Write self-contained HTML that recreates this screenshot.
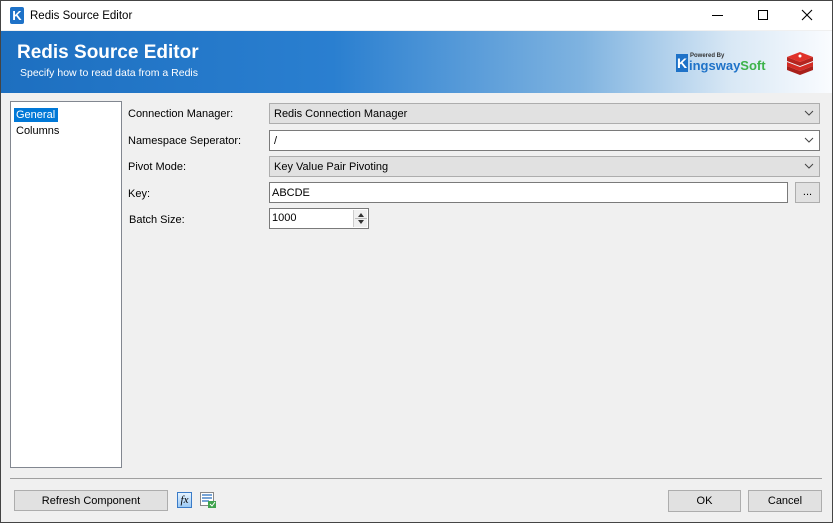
<!DOCTYPE html>
<html><head><style>
*{box-sizing:border-box;margin:0;padding:0}
body{width:833px;height:523px;overflow:hidden;background:#f0f0f0;font-family:"Liberation Sans",sans-serif;font-size:11px;color:#000;position:relative}
.abs{position:absolute}
.frame{left:0;top:0;width:833px;height:523px;border:1px solid #444;z-index:10;pointer-events:none}
.title{left:0;top:0;width:833px;height:30px;background:#fff}
.banner{left:1px;top:31px;width:831px;height:62px;background:linear-gradient(90deg,#1d6fc0 0%,#2a7fd0 40%,#7fb3e0 70%,#d9e8f5 88%,#fafcff 100%)}
.lbl{font-size:11px}
.combo{background:#e1e1e1;border:1px solid #adadad;height:21px;padding:4px 4px}
.tb{background:#fff;border:1px solid #7a7a7a;height:21px;padding:4px 2px}
.chev{position:absolute;right:4px;top:3px}
.btn{background:#e1e1e1;border:1px solid #adadad;text-align:center;padding-top:4px}
</style></head><body>
<div class="abs frame"></div>
<div class="abs title">
 <div class="abs" style="left:10px;top:7px;width:14px;height:17px;background:#1e72c8;border-radius:2px;color:#fff;font-weight:bold;font-size:13px;text-align:center;line-height:17px">K</div>
 <div class="abs" style="left:30px;top:10px;font-size:11.5px">Redis Source Editor</div>
 <div class="abs" style="left:712px;top:15px;width:11px;height:1px;background:#000"></div>
 <div class="abs" style="left:758px;top:10px;width:10px;height:10px;border:1px solid #000"></div>
 <svg class="abs" style="left:801px;top:9px" width="12" height="12"><path d="M1 1L11 11M11 1L1 11" stroke="#000" stroke-width="1.1"/></svg>
</div>
<div class="abs banner">
 <div class="abs" style="left:16px;top:11px;color:#fff;font-weight:bold;font-size:19px">Redis Source Editor</div>
 <div class="abs" style="left:19px;top:36px;color:#fff;font-size:10.5px">Specify how to read data from a Redis</div>
 <div class="abs" style="left:675px;top:23px;width:12px;height:18px;background:#1e72c8;color:#fff;font-weight:bold;font-size:14px;line-height:18px;text-align:center">K</div>
 <div class="abs" style="left:689px;top:22px;font-size:6px;font-weight:bold;color:#333">Powered By</div>
 <div class="abs" style="left:688px;top:27px;font-size:13px;font-weight:bold;color:#1e72c8">ingsway<span style="color:#3cb34a">Soft</span></div>
 <svg class="abs" style="left:784px;top:20px" width="30" height="24"><path d="M2 6L15 1L28 6L15 11Z" fill="#e0322a"/><path d="M2 6L15 11L28 6V10L15 15L2 10Z" fill="#b5241e"/><path d="M2 11L15 16L28 11V15L15 20L2 15Z" fill="#d32b24"/><path d="M2 15L15 20L28 15V19L15 24L2 19Z" fill="#a9201b"/><circle cx="15" cy="5" r="1.5" fill="#fff"/></svg>
</div>
<div class="abs" style="left:10px;top:101px;width:112px;height:367px;background:#fff;border:1px solid #828790">
 <div class="abs" style="left:3px;top:6px;background:#0078d7;color:#fff;padding:1px 3px 1px 2px">General</div>
 <div class="abs" style="left:5px;top:23px">Columns</div>
</div>
<div class="abs lbl" style="left:128px;top:108px">Connection Manager:</div>
<div class="abs lbl" style="left:128px;top:135px">Namespace Seperator:</div>
<div class="abs lbl" style="left:128px;top:161px">Pivot Mode:</div>
<div class="abs lbl" style="left:128px;top:188px">Key:</div>
<div class="abs lbl" style="left:129px;top:214px">Batch Size:</div>
<div class="abs combo" style="left:269px;top:103px;width:551px">Redis Connection Manager<svg class="chev" width="12" height="12"><path d="M2 4L6 8L10 4" fill="none" stroke="#444"/></svg></div>
<div class="abs tb" style="left:269px;top:130px;width:551px;padding-left:4px">/<svg class="chev" width="12" height="12"><path d="M2 4L6 8L10 4" fill="none" stroke="#444"/></svg></div>
<div class="abs combo" style="left:269px;top:156px;width:551px">Key Value Pair Pivoting<svg class="chev" width="12" height="12"><path d="M2 4L6 8L10 4" fill="none" stroke="#444"/></svg></div>
<div class="abs tb" style="left:269px;top:182px;width:519px;height:21px">ABCDE</div>
<div class="abs btn" style="left:795px;top:182px;width:25px;height:21px;padding-top:3px">...</div>
<div class="abs tb" style="left:269px;top:208px;width:100px;height:21px;padding-top:3px">1000
 <div class="abs" style="left:83px;top:1px;width:14px;height:17px;border-left:1px solid #ccc;background:#f0f0f0">
  <svg width="14" height="17"><path d="M4 7L7 3L10 7Z" fill="#333"/><path d="M4 10L7 14L10 10Z" fill="#333"/><path d="M1 8.5H13" stroke="#bbb"/></svg>
 </div>
</div>
<div class="abs" style="left:10px;top:478px;width:812px;height:1px;background:#a0a0a0"></div>
<div class="abs btn" style="left:14px;top:490px;width:154px;height:21px">Refresh Component</div>
<div class="abs" style="left:177px;top:492px;width:15px;height:16px;background:linear-gradient(#e6f3ff,#9ccaf5);border:1px solid #3a7bc8;font-style:italic;font-family:'Liberation Serif',serif;font-size:11px;text-align:center;line-height:14px">fx</div>
<svg class="abs" style="left:200px;top:492px" width="17" height="17"><rect x="0.5" y="0.5" width="13" height="13" fill="#fff" stroke="#888"/><path d="M2 3H12M2 6H12M2 9H9" stroke="#4a86c8" stroke-width="1.5"/><rect x="8" y="9" width="8" height="7" fill="#3fa34d"/><path d="M10 12L12 14L15 10" stroke="#fff" fill="none"/></svg>
<div class="abs btn" style="left:668px;top:490px;width:73px;height:22px">OK</div>
<div class="abs btn" style="left:748px;top:490px;width:74px;height:22px">Cancel</div>
</body></html>
